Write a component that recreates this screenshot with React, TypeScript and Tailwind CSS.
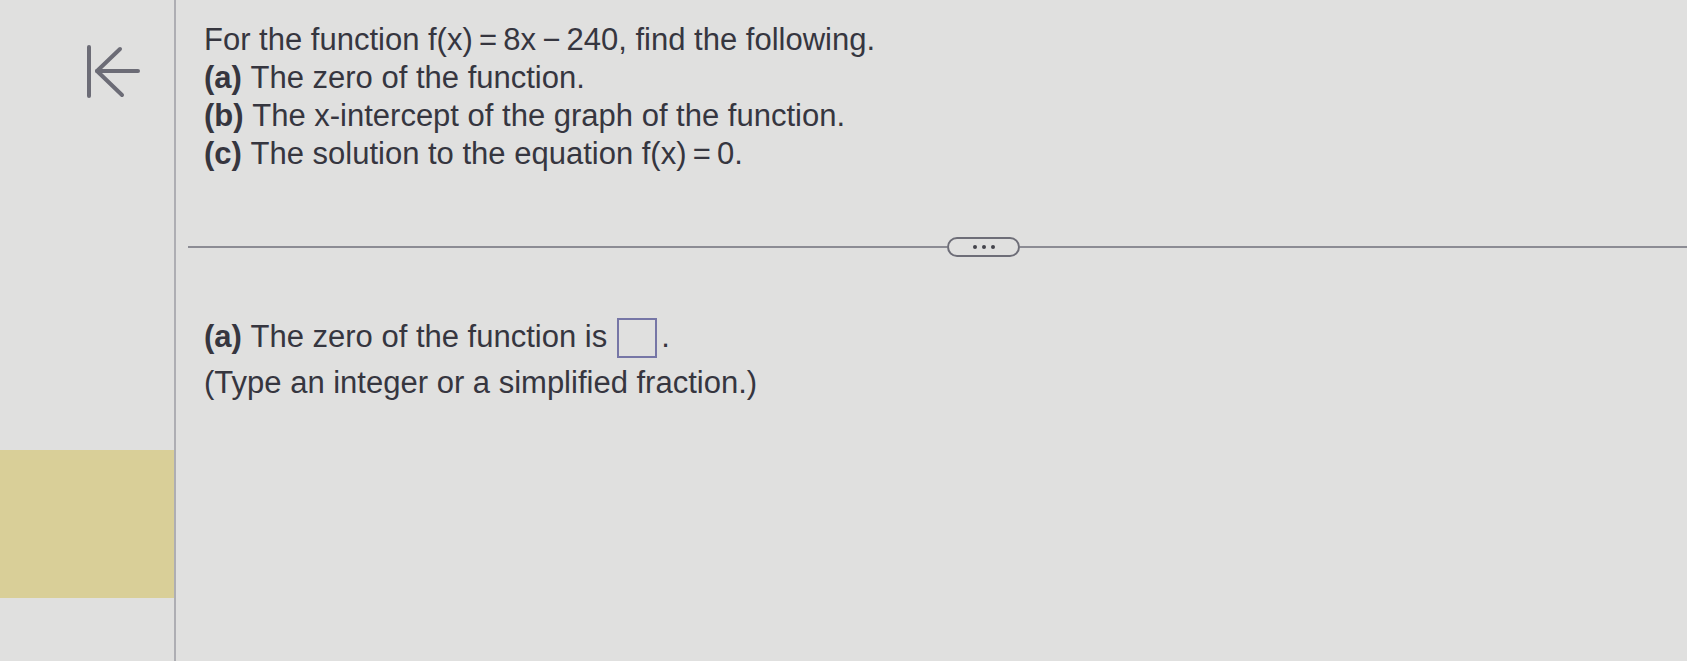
import React from "react";

const BackIcon = () => (
  <svg width="56" height="56" viewBox="0 0 56 56" fill="none" stroke="#6c6c76" strokeWidth="4" strokeLinecap="round" strokeLinejoin="round">
    <path d="M3 3 L3 52" />
    <path d="M11 27 L52 27" />
    <path d="M34 5 L11 27 L36 51" />
  </svg>
);

const Line = ({ label, children }: { label?: string; children: React.ReactNode }) => (
  <div className="h-[38px] leading-[38px] whitespace-nowrap">
    {label && <span className="font-bold">{label} </span>}
    {children}
  </div>
);

export default function App() {
  return (
    <div className="flex h-[661px] w-[1687px] overflow-hidden bg-[#e0e0df] font-['Liberation_Sans',Arial,sans-serif] text-[31px] text-[#36363f]">
      {/* sidebar */}
      <aside className="flex w-[176px] shrink-0 flex-col border-r-2 border-[#aeaeb3]">
        <div className="pl-[86px] pt-[44px]">
          <BackIcon />
        </div>
        <div className="mt-[350px] h-[148px] bg-[#d9cf98]" />
      </aside>

      {/* question */}
      <main className="flex-1 pt-[21px]">
        <div className="pl-[28px]">
          <Line>For the function f(x)&thinsp;=&thinsp;8x&thinsp;−&thinsp;240, find the following.</Line>
          <Line label="(a)">The zero of the function.</Line>
          <Line label="(b)">The x-intercept of the graph of the function.</Line>
          <Line label="(c)">The solution to the equation f(x)&thinsp;=&thinsp;0.</Line>
        </div>

        <div className="mt-[64px] flex h-[20px] items-center pl-[12px]">
          <div className="h-[2px] w-[759px] bg-[#8c8c94]" />
          <div className="flex h-[20px] w-[73px] shrink-0 items-center justify-center gap-[5px] rounded-full border-2 border-[#6e6e78]">
            <span className="h-[4px] w-[4px] rounded-full bg-[#44444c]" />
            <span className="h-[4px] w-[4px] rounded-full bg-[#44444c]" />
            <span className="h-[4px] w-[4px] rounded-full bg-[#44444c]" />
          </div>
          <div className="h-[2px] flex-1 bg-[#8c8c94]" />
        </div>

        <div className="mt-[61px] pl-[28px]">
          <div className="h-[46px] leading-[38px] whitespace-nowrap">
            <span className="font-bold">(a) </span>The zero of the function is
            <span className="ml-[10px] inline-block h-[40px] w-[40px] border-2 border-[#7676a6] align-[-11px]" />
            <span className="ml-[4px]">.</span>
          </div>
          <div className="leading-[38px] whitespace-nowrap">(Type an integer or a simplified fraction.)</div>
        </div>
      </main>
    </div>
  );
}
